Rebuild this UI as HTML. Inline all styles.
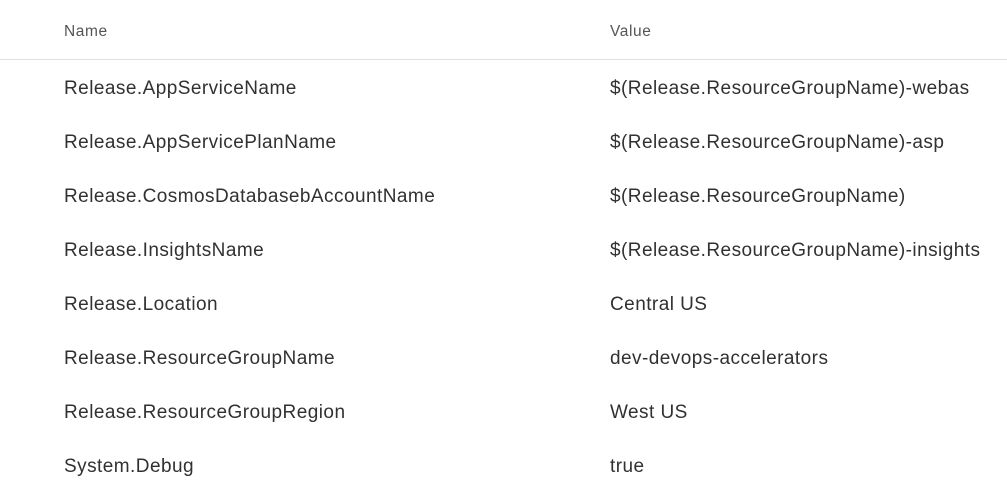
<!DOCTYPE html>
<html><head><style>
body{margin:0;width:1007px;height:491px;background:#fff;font-family:"Liberation Sans",sans-serif;color:#323130;overflow:hidden;position:relative}
.h{position:absolute;top:23px;font-size:15.5px;color:#555;letter-spacing:.6px}
.line{position:absolute;top:59px;left:0;width:1007px;height:1px;background:#e1e1e1}
.r{position:absolute;font-size:19px;white-space:nowrap;letter-spacing:.45px}
</style></head><body>
<div class="h" style="left:64px">Name</div>
<div class="h" style="left:610px">Value</div>
<div class="line"></div>
<div class="r" style="left:64px;top:78px">Release.AppServiceName</div><div class="r" style="left:610px;top:78px">$(Release.ResourceGroupName)-webas</div>
<div class="r" style="left:64px;top:132px">Release.AppServicePlanName</div><div class="r" style="left:610px;top:132px">$(Release.ResourceGroupName)-asp</div>
<div class="r" style="left:64px;top:186px">Release.CosmosDatabasebAccountName</div><div class="r" style="left:610px;top:186px">$(Release.ResourceGroupName)</div>
<div class="r" style="left:64px;top:240px">Release.InsightsName</div><div class="r" style="left:610px;top:240px">$(Release.ResourceGroupName)-insights</div>
<div class="r" style="left:64px;top:294px">Release.Location</div><div class="r" style="left:610px;top:294px">Central US</div>
<div class="r" style="left:64px;top:348px">Release.ResourceGroupName</div><div class="r" style="left:610px;top:348px">dev-devops-accelerators</div>
<div class="r" style="left:64px;top:402px">Release.ResourceGroupRegion</div><div class="r" style="left:610px;top:402px">West US</div>
<div class="r" style="left:64px;top:456px">System.Debug</div><div class="r" style="left:610px;top:456px">true</div>
</body></html>
